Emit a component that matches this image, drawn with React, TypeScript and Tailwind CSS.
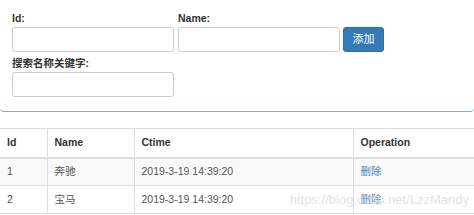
import React from "react";

type Car = { id: number; name: string; ctime: string };

const cars: Car[] = [
  { id: 1, name: "奔驰", ctime: "2019-3-19 14:39:20" },
  { id: 2, name: "宝马", ctime: "2019-3-19 14:39:20" },
];

const font = {
  fontFamily: '"Liberation Sans", "Noto Sans CJK SC", sans-serif',
};

function Field({ label }: { label: string }) {
  return (
    <label className="flex flex-col">
      <span className="h-[12px] text-[10.5px] font-bold text-[#333] leading-[12px] mb-[3px]">
        {label}
      </span>
      <input className="w-[162px] h-[25px] rounded-[3px] border border-[#ccc] bg-white outline-none" />
    </label>
  );
}

export default function App() {
  return (
    <div
      className="relative w-[474px] h-[215px] overflow-hidden bg-white text-[#333]"
      style={font}
    >
      {/* panel */}
      <div className="border-b border-[#86a8c8] rounded-b-[4px] pl-[12px] pt-[12px] pb-[14px]">
        <div className="flex items-end gap-[4px]">
          <Field label="Id:" />
          <Field label="Name:" />
          <button className="ml-[-1px] w-[41px] h-[25px] rounded-[3px] bg-[#337ab7] border border-[#2e6da4] text-white text-[11px]">
            添加
          </button>
        </div>
        <div className="mt-[5px]">
          <Field label="搜索名称关键字:" />
        </div>
      </div>

      {/* table */}
      <table className="mt-[16px] w-full border-collapse text-[10.5px]">
        <colgroup>
          <col className="w-[47px]" />
          <col className="w-[87px]" />
          <col className="w-[219px]" />
          <col />
        </colgroup>
        <thead>
          <tr className="h-[29px] border-t border-[#ddd]">
            {["Id", "Name", "Ctime", "Operation"].map((h, i) => (
              <th
                key={h}
                className={
                  "text-left font-bold text-[#333] pl-[7px] border-b-2 border-[#ddd] " +
                  (i > 0 ? "border-l border-l-[#ddd]" : "")
                }
              >
                {h}
              </th>
            ))}
          </tr>
        </thead>
        <tbody>
          {cars.map((c, idx) => (
            <tr
              key={c.id}
              className={
                "h-[28px] border-b border-[#ddd] " +
                (idx % 2 === 0 ? "bg-[#f9f9f9]" : "bg-white")
              }
            >
              <td className="pl-[7px] text-[#555]">{c.id}</td>
              <td className="pl-[7px] text-[#555] border-l border-[#ddd]">{c.name}</td>
              <td className="pl-[7px] text-[#555] border-l border-[#ddd]">{c.ctime}</td>
              <td className="pl-[7px] border-l border-[#ddd]">
                <a className="text-[#4a86c0]">删除</a>
              </td>
            </tr>
          ))}
        </tbody>
      </table>

      <div className="absolute right-[5px] bottom-[6px] text-[13px] text-[#dcdcdc] opacity-80 pointer-events-none">
        https://blog.csdn.net/LzzMandy
      </div>
    </div>
  );
}
